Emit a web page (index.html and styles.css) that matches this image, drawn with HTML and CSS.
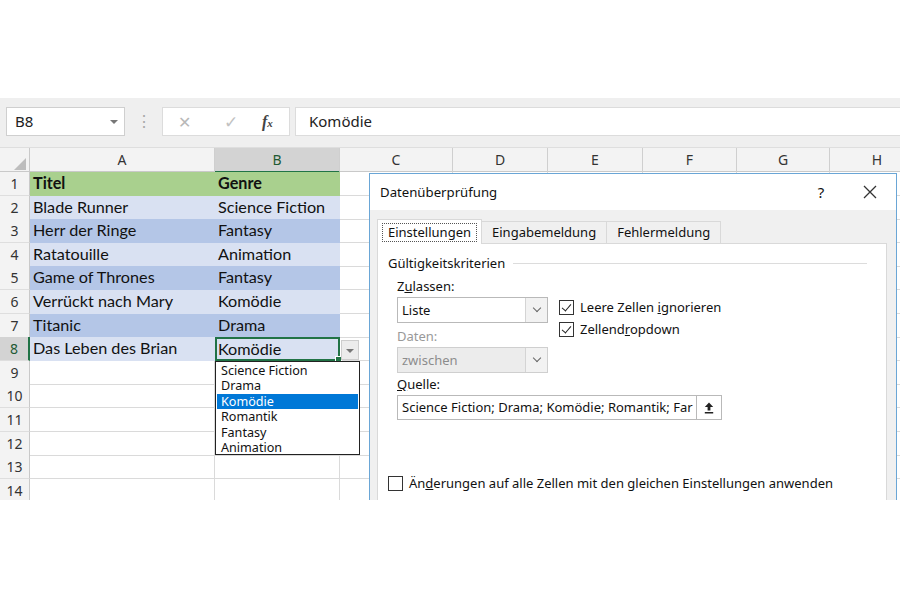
FILE: index.html
```html
<!DOCTYPE html>
<html lang="de">
  <head>
    <meta charset="UTF-8" />
    <title>Datenüberprüfung</title>
    <link rel="stylesheet" href="styles.css">
  </head>
  <body>
    <div class="screen">
      <div class="formula-bar">
        <div class="name-box">B8<span class="nb-arrow"></span></div>
        <div class="fb-sep">⋮</div>
        <div class="fb-buttons">
          <span class="fb-btn cancel">✕</span>
          <span class="fb-btn ok">✓</span>
          <span class="fb-btn fx">f<span>x</span></span>
        </div>
        <div class="fb-input">Komödie</div>
      </div>

      <div class="sheet">
        <div class="row head">
          <div class="corner"><svg width="12" height="12" viewBox="0 0 12 12"><path d="M12 0 L12 12 L0 12 Z" fill="#bdbdbd"/></svg></div>
          <div class="ch">A</div><div class="ch sel">B</div><div class="ch">C</div><div class="ch">D</div>
          <div class="ch">E</div><div class="ch">F</div><div class="ch">G</div><div class="ch">H</div>
        </div>
        <div class="row">
          <div class="rh">1</div><div class="c t-head">Titel</div><div class="c t-head">Genre</div>
          <div class="c"></div><div class="c"></div><div class="c"></div><div class="c"></div><div class="c"></div><div class="c"></div>
        </div>
        <div class="row">
          <div class="rh">2</div><div class="c t-light">Blade Runner</div><div class="c t-light">Science Fiction</div>
          <div class="c"></div><div class="c"></div><div class="c"></div><div class="c"></div><div class="c"></div><div class="c"></div>
        </div>
        <div class="row">
          <div class="rh">3</div><div class="c t-dark">Herr der Ringe</div><div class="c t-dark">Fantasy</div>
          <div class="c"></div><div class="c"></div><div class="c"></div><div class="c"></div><div class="c"></div><div class="c"></div>
        </div>
        <div class="row">
          <div class="rh">4</div><div class="c t-light">Ratatouille</div><div class="c t-light">Animation</div>
          <div class="c"></div><div class="c"></div><div class="c"></div><div class="c"></div><div class="c"></div><div class="c"></div>
        </div>
        <div class="row">
          <div class="rh">5</div><div class="c t-dark">Game of Thrones</div><div class="c t-dark">Fantasy</div>
          <div class="c"></div><div class="c"></div><div class="c"></div><div class="c"></div><div class="c"></div><div class="c"></div>
        </div>
        <div class="row">
          <div class="rh">6</div><div class="c t-light">Verrückt nach Mary</div><div class="c t-light">Komödie</div>
          <div class="c"></div><div class="c"></div><div class="c"></div><div class="c"></div><div class="c"></div><div class="c"></div>
        </div>
        <div class="row">
          <div class="rh">7</div><div class="c t-dark">Titanic</div><div class="c t-dark">Drama</div>
          <div class="c"></div><div class="c"></div><div class="c"></div><div class="c"></div><div class="c"></div><div class="c"></div>
        </div>
        <div class="row">
          <div class="rh sel">8</div><div class="c t-light">Das Leben des Brian</div><div class="c t-light active">Komödie</div>
          <div class="c"></div><div class="c"></div><div class="c"></div><div class="c"></div><div class="c"></div><div class="c"></div>
        </div>
        <div class="row">
          <div class="rh">9</div><div class="c"></div><div class="c"></div>
          <div class="c"></div><div class="c"></div><div class="c"></div><div class="c"></div><div class="c"></div><div class="c"></div>
        </div>
        <div class="row">
          <div class="rh">10</div><div class="c"></div><div class="c"></div>
          <div class="c"></div><div class="c"></div><div class="c"></div><div class="c"></div><div class="c"></div><div class="c"></div>
        </div>
        <div class="row">
          <div class="rh">11</div><div class="c"></div><div class="c"></div>
          <div class="c"></div><div class="c"></div><div class="c"></div><div class="c"></div><div class="c"></div><div class="c"></div>
        </div>
        <div class="row">
          <div class="rh">12</div><div class="c"></div><div class="c"></div>
          <div class="c"></div><div class="c"></div><div class="c"></div><div class="c"></div><div class="c"></div><div class="c"></div>
        </div>
        <div class="row">
          <div class="rh">13</div><div class="c"></div><div class="c"></div>
          <div class="c"></div><div class="c"></div><div class="c"></div><div class="c"></div><div class="c"></div><div class="c"></div>
        </div>
        <div class="row">
          <div class="rh">14</div><div class="c"></div><div class="c"></div>
          <div class="c"></div><div class="c"></div><div class="c"></div><div class="c"></div><div class="c"></div><div class="c"></div>
        </div>
      </div>

      <!-- cell dropdown for B8 -->
      <div class="cell-arrow"><span></span></div>
      <ul class="cell-list">
        <li>Science Fiction</li>
        <li>Drama</li>
        <li class="hl">Komödie</li>
        <li>Romantik</li>
        <li>Fantasy</li>
        <li>Animation</li>
      </ul>

      <!-- Datenüberprüfung dialog -->
      <div class="dialog">
        <div class="dlg-title">
          <span class="dlg-name">Datenüberprüfung</span>
          <span class="dlg-help">?</span>
          <span class="dlg-close"><svg width="14" height="14" viewBox="0 0 14 14"><path d="M1 1 L13 13 M13 1 L1 13" stroke="#333" stroke-width="1.3"/></svg></span>
        </div>
        <div class="dlg-body">
          <div class="tabs">
            <div class="tab active"><span>Einstellungen</span></div>
            <div class="tab">Eingabemeldung</div>
            <div class="tab">Fehlermeldung</div>
          </div>
          <div class="panel">
            <div class="group-title"><span>Gültigkeitskriterien</span></div>
            <div class="form-top">
              <div class="form-left">
                <label>Z<u>u</u>lassen:</label>
                <div class="select"><span>Liste</span><i class="chev"></i></div>
                <label class="disabled">Daten:</label>
                <div class="select disabled"><span>zwischen</span><i class="chev"></i></div>
              </div>
              <div class="form-right">
                <div class="check"><span class="box on"></span><span>Leere Zellen <u>i</u>gnorieren</span></div>
                <div class="check"><span class="box on"></span><span>Zellend<u>r</u>opdown</span></div>
              </div>
            </div>
            <label class="src-label"><u>Q</u>uelle:</label>
            <div class="source">
              <div class="source-text">Science Fiction; Drama; Komödie; Romantik; Far</div>
              <div class="source-btn"><svg width="10" height="12" viewBox="0 0 10 12"><path d="M5 0.5 L0.8 5 H3.6 V8.5 H6.4 V5 H9.2 Z" fill="#222"/><rect x="0.8" y="10" width="8.4" height="1.5" fill="#222"/></svg></div>
            </div>
            <div class="check apply"><span class="box"></span><span>Än<u>d</u>erungen auf alle Zellen mit den gleichen Einstellungen anwenden</span></div>
          </div>
        </div>
      </div>
    </div>
  </body>
</html>
```

FILE: styles.css
```css
* {
  margin: 0;
  padding: 0;
  box-sizing: border-box;
}

body {
  background: #fff;
  font-family: 'Noto Sans', 'Open Sans', sans-serif;
  width: 900px;
  height: 600px;
  overflow: hidden;
}

.screen {
  position: relative;
  margin-top: 98px;
  height: 402px;
  overflow: hidden;
  background: #fff;
}

/* formula bar */
.formula-bar {
  height: 49px;
  background: #efefef;
  display: flex;
  align-items: flex-start;
  padding: 9px 0 0 6px;
}

.name-box {
  position: relative;
  width: 119px;
  height: 29px;
  background: #fff;
  border: 1px solid #cfcfcf;
  font-size: 15px;
  line-height: 27px;
  padding-left: 8px;
  color: #222;
}

.nb-arrow {
  position: absolute;
  right: 6px;
  top: 12px;
  border-left: 4px solid transparent;
  border-right: 4px solid transparent;
  border-top: 4px solid #777;
}

.fb-sep {
  width: 37px;
  text-align: center;
  color: #a8a8a8;
  font-size: 16px;
  line-height: 29px;
}

.fb-buttons {
  width: 128px;
  height: 29px;
  background: #fff;
  border: 1px solid #dcdcdc;
  display: flex;
  align-items: center;
  padding-left: 15px;
}

.fb-btn {
  color: #b8b8b8;
  font-size: 16px;
}

.fb-btn.cancel {
  width: 46px;
}

.fb-btn.ok {
  width: 38px;
  font-size: 17px;
  color: #c2c2c2;
}

.fb-btn.fx {
  font-family: 'Liberation Serif', serif;
  font-style: italic;
  font-weight: bold;
  font-size: 16px;
  color: #444;
}

.fb-btn.fx span {
  font-size: 11px;
}

.fb-input {
  flex: 1;
  height: 29px;
  margin-left: 5px;
  background: #fff;
  border: 1px solid #dcdcdc;
  border-right: none;
  font-size: 15px;
  line-height: 27px;
  padding-left: 13px;
  color: #222;
}

/* sheet grid */
.sheet {
  width: 925px;
}

.row {
  display: grid;
  grid-template-columns: 30px 185px 125px 113px 95px 95px 94px 93px 95px;
  height: 23.6px;
}

.row.head {
  height: 25px;
  background: #f3f3f3;
  border-top: 1px solid #dedede;
  border-bottom: 1px solid #c9c9c9;
}

.corner {
  display: flex;
  align-items: flex-end;
  justify-content: flex-end;
  padding: 0 3px 3px 0;
  border-right: 1px solid #c9c9c9;
}

.ch {
  text-align: center;
  font-size: 14px;
  line-height: 23px;
  color: #333;
  border-right: 1px solid #cfcfcf;
}

.ch.sel {
  background: #d3d3d3;
  border-bottom: 2px solid #217346;
  color: #1f5a34;
}

.rh {
  background: #f3f3f3;
  border-right: 1px solid #c9c9c9;
  border-bottom: 1px solid #dedede;
  text-align: center;
  font-size: 14px;
  line-height: 23px;
  color: #333;
}

.rh.sel {
  background: #d3d3d3;
  border-right: 2px solid #217346;
  color: #1f5a34;
}

.c {
  border-right: 1px solid #dadada;
  border-bottom: 1px solid #dadada;
  font-family: 'Lato', 'Open Sans', sans-serif;
  font-size: 16.2px;
  line-height: 22px;
  padding-left: 3px;
  color: #111;
  white-space: nowrap;
}

.t-head {
  background: #a9d08e;
  font-weight: bold;
  border-color: #a9d08e;
}

.t-light {
  background: #d9e1f2;
  border-color: #d9e1f2;
}

.t-dark {
  background: #b4c6e7;
  border-color: #b4c6e7;
}

.c.active {
  border: 2px solid #217346;
  line-height: 20px;
  padding-left: 1px;
  position: relative;
}

.c.active::after {
  content: '';
  position: absolute;
  right: -4px;
  bottom: -4px;
  width: 5px;
  height: 5px;
  background: #217346;
  border: 1px solid #fff;
}

/* in-cell dropdown */
.cell-arrow {
  position: absolute;
  left: 341px;
  top: 242px;
  width: 18px;
  height: 20px;
  background: #ececec;
  border: 1px solid #cdcdcd;
}

.cell-arrow span {
  position: absolute;
  left: 4px;
  top: 8px;
  border-left: 4px solid transparent;
  border-right: 4px solid transparent;
  border-top: 4px solid #777;
}

.cell-list {
  position: absolute;
  left: 215px;
  top: 263px;
  width: 145px;
  height: 94px;
  background: #fff;
  border: 1px solid #222;
  list-style: none;
  padding: 1px;
  font-size: 12.6px;
  line-height: 15.4px;
  color: #111;
}

.cell-list li {
  padding-left: 4px;
}

.cell-list li.hl {
  background: #0078d7;
  color: #fff;
}

/* dialog */
.dialog {
  position: absolute;
  left: 369px;
  top: 75px;
  width: 528px;
  height: 360px;
  background: #f0f0f0;
  border: 1px solid #6aa6d6;
  font-size: 13px;
  color: #111;
}

.dlg-title {
  height: 36px;
  background: #fff;
  display: flex;
  align-items: center;
  padding-left: 10px;
}

.dlg-name {
  flex: 1;
  font-size: 13.2px;
}

.dlg-help {
  font-size: 15px;
  width: 50px;
  text-align: center;
}

.dlg-close {
  width: 50px;
  padding-left: 17px;
  display: flex;
}

.dlg-body {
  padding: 9px 9px 0 7px;
}

.tabs {
  display: flex;
  align-items: flex-end;
  height: 24px;
}

.tab {
  height: 22px;
  padding: 0 10px;
  line-height: 20px;
  border: 1px solid #d9d9d9;
  border-bottom: none;
  margin-left: -1px;
}

.tab.active {
  height: 25px;
  margin-left: 0;
  margin-bottom: -1px;
  background: #fff;
  padding: 3px 4px 0;
  position: relative;
  z-index: 1;
}

.tab.active span {
  display: block;
  border: 1px dotted #555;
  line-height: 17px;
  padding: 0 5px;
}

.panel {
  background: #fff;
  border: 1px solid #d9d9d9;
  height: 300px;
  padding: 10px 19px 0 19px;
}

.group-title {
  display: flex;
  align-items: center;
  margin-left: -9px;
  height: 18px;
}

.group-title::after {
  content: '';
  flex: 1;
  border-top: 1px solid #dcdcdc;
  margin-left: 8px;
}

label {
  display: block;
  height: 18px;
  line-height: 18px;
  margin-top: 5px;
}

label.disabled {
  color: #999;
  margin-top: 4px;
}

label.src-label {
  margin-top: 2px;
}

.form-top {
  display: flex;
  gap: 11px;
}

.form-left {
  width: 151px;
}

.select {
  display: flex;
  height: 26px;
  margin-top: 2px;
  border: 1px solid #b9b9b9;
  background: #fff;
}

.select span {
  flex: 1;
  padding-left: 4px;
  line-height: 24px;
}

.select.disabled {
  background: #ececec;
  border-color: #cfcfcf;
  color: #8c8c8c;
}

.chev {
  width: 22px;
  border-left: 1px solid #d4d4d4;
  background: #f2f2f2;
  position: relative;
}

.chev::after {
  content: '';
  position: absolute;
  left: 8px;
  top: 7px;
  width: 5px;
  height: 5px;
  border-right: 1px solid #666;
  border-bottom: 1px solid #666;
  transform: rotate(45deg);
}

.form-right {
  padding-top: 24px;
}

.check {
  display: flex;
  align-items: center;
  height: 22px;
}

.box {
  width: 15px;
  height: 15px;
  border: 1px solid #333;
  background: #fff;
  margin-right: 6px;
  position: relative;
}

.box.on::after {
  content: '';
  position: absolute;
  left: 4px;
  top: 1px;
  width: 4px;
  height: 8px;
  border-right: 1.3px solid #222;
  border-bottom: 1.3px solid #222;
  transform: rotate(40deg);
}

.source {
  display: flex;
  width: 325px;
  height: 25px;
  margin-top: 2px;
}

.source-text {
  width: 300px;
  border: 1px solid #b9b9b9;
  padding-left: 4px;
  line-height: 23px;
  white-space: nowrap;
  overflow: hidden;
}

.source-btn {
  width: 25px;
  border: 1px solid #b9b9b9;
  border-left: none;
  display: flex;
  align-items: center;
  justify-content: center;
}

.check.apply {
  margin-top: 52px;
  margin-left: -9px;
}
```
